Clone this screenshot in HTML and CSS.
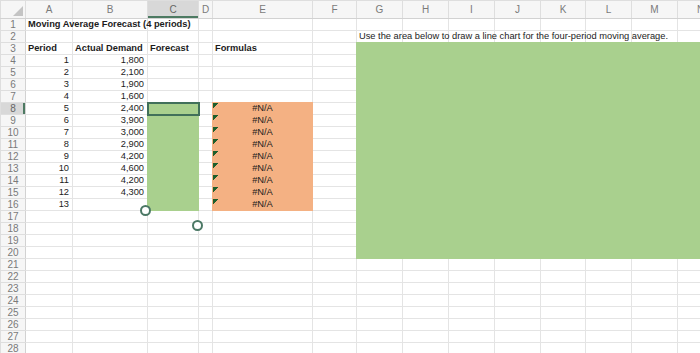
FILE: index.html
```html
<!DOCTYPE html>
<html lang="en">
<head>
  <meta charset="UTF-8" />
  <title>Moving Average Forecast</title>
  <link rel="stylesheet" href="styles.css">
</head>
<body>
  <div class="sheet">
    <table class="grid">
      <colgroup>
        <col class="w-hdr"><col class="w-a"><col class="w-b"><col class="w-c"><col class="w-d"><col class="w-e"><col class="w-f">
        <col class="w-g"><col class="w-g"><col class="w-g"><col class="w-g"><col class="w-k"><col class="w-g"><col class="w-g"><col class="w-g">
      </colgroup>
      <thead>
        <tr>
          <th class="corner"><span class="tri"></span></th>
          <th>A</th><th>B</th><th class="cur">C</th><th>D</th><th>E</th><th>F</th>
          <th>G</th><th>H</th><th>I</th><th>J</th><th>K</th><th>L</th><th>M</th><th>N</th>
        </tr>
      </thead>
      <tbody>
        <tr><th>1</th><td class="b">Moving Average Forecast (4 periods)</td><td></td><td></td><td></td><td></td><td></td><td></td><td></td><td></td><td></td><td></td><td></td><td></td><td></td></tr>
        <tr><th>2</th><td></td><td></td><td></td><td></td><td></td><td></td><td>Use the area below to draw a line chart for the four-period moving average.</td><td></td><td></td><td></td><td></td><td></td><td></td><td></td></tr>
        <tr><th>3</th><td class="b">Period</td><td class="b">Actual Demand</td><td class="b">Forecast</td><td></td><td class="b">Formulas</td><td></td><td class="chart" colspan="8" rowspan="18"></td></tr>
        <tr><th>4</th><td class="num">1</td><td class="num">1,800</td><td></td><td></td><td></td><td></td></tr>
        <tr><th>5</th><td class="num">2</td><td class="num">2,100</td><td></td><td></td><td></td><td></td></tr>
        <tr><th>6</th><td class="num">3</td><td class="num">1,900</td><td></td><td></td><td></td><td></td></tr>
        <tr><th>7</th><td class="num">4</td><td class="num">1,600</td><td></td><td></td><td></td><td></td></tr>
        <tr><th class="cur">8</th><td class="num">5</td><td class="num">2,400</td><td class="fc sel"></td><td></td><td class="err">#N/A</td><td></td></tr>
        <tr><th>9</th><td class="num">6</td><td class="num">3,900</td><td class="fc"></td><td></td><td class="err">#N/A</td><td></td></tr>
        <tr><th>10</th><td class="num">7</td><td class="num">3,000</td><td class="fc"></td><td></td><td class="err">#N/A</td><td></td></tr>
        <tr><th>11</th><td class="num">8</td><td class="num">2,900</td><td class="fc"></td><td></td><td class="err">#N/A</td><td></td></tr>
        <tr><th>12</th><td class="num">9</td><td class="num">4,200</td><td class="fc"></td><td></td><td class="err">#N/A</td><td></td></tr>
        <tr><th>13</th><td class="num">10</td><td class="num">4,600</td><td class="fc"></td><td></td><td class="err">#N/A</td><td></td></tr>
        <tr><th>14</th><td class="num">11</td><td class="num">4,200</td><td class="fc"></td><td></td><td class="err">#N/A</td><td></td></tr>
        <tr><th>15</th><td class="num">12</td><td class="num">4,300</td><td class="fc"></td><td></td><td class="err">#N/A</td><td></td></tr>
        <tr><th>16</th><td class="num">13</td><td></td><td class="fc"></td><td></td><td class="err">#N/A</td><td></td></tr>
        <tr><th>17</th><td></td><td></td><td></td><td></td><td></td><td></td></tr>
        <tr><th>18</th><td></td><td></td><td></td><td></td><td></td><td></td></tr>
        <tr><th>19</th><td></td><td></td><td></td><td></td><td></td><td></td></tr>
        <tr><th>20</th><td></td><td></td><td></td><td></td><td></td><td></td></tr>
        <tr><th>21</th><td></td><td></td><td></td><td></td><td></td><td></td><td></td><td></td><td></td><td></td><td></td><td></td><td></td><td></td></tr>
        <tr><th>22</th><td></td><td></td><td></td><td></td><td></td><td></td><td></td><td></td><td></td><td></td><td></td><td></td><td></td><td></td></tr>
        <tr><th>23</th><td></td><td></td><td></td><td></td><td></td><td></td><td></td><td></td><td></td><td></td><td></td><td></td><td></td><td></td></tr>
        <tr><th>24</th><td></td><td></td><td></td><td></td><td></td><td></td><td></td><td></td><td></td><td></td><td></td><td></td><td></td><td></td></tr>
        <tr><th>25</th><td></td><td></td><td></td><td></td><td></td><td></td><td></td><td></td><td></td><td></td><td></td><td></td><td></td><td></td></tr>
        <tr><th>26</th><td></td><td></td><td></td><td></td><td></td><td></td><td></td><td></td><td></td><td></td><td></td><td></td><td></td><td></td></tr>
        <tr><th>27</th><td></td><td></td><td></td><td></td><td></td><td></td><td></td><td></td><td></td><td></td><td></td><td></td><td></td><td></td></tr>
        <tr><th>28</th><td></td><td></td><td></td><td></td><td></td><td></td><td></td><td></td><td></td><td></td><td></td><td></td><td></td><td></td></tr>
      </tbody>
    </table>

    <!-- selection handles -->
    <div class="handle handle-start"></div>
    <div class="handle handle-end"></div>
  </div>
</body>
</html>
```

FILE: styles.css
```css
html, body {
  margin: 0;
  overflow: hidden;
  background: #fff;
}

body {
  font-family: "Liberation Sans", Arial, sans-serif;
}

.sheet {
  position: relative;
}

.grid {
  border-collapse: collapse;
  table-layout: fixed;
  width: 723px;
  font-size: 9.3px;
  color: #1c1c1c;
}

.w-hdr { width: 25px; }
.w-a { width: 47px; }
.w-b { width: 75px; }
.w-c { width: 51px; }
.w-d { width: 14px; }
.w-e { width: 100px; }
.w-f { width: 44px; }
.w-g { width: 46px; }
.w-k { width: 45px; }

/* row height = height + 1px gridline */
.grid td,
.grid th {
  height: 11px;
  padding: 0 2px;
  border: 1px solid #e4e4e4;
  white-space: nowrap;
  line-height: 11px;
  overflow: visible;
  text-align: left;
}

.grid th {
  background: #f6f6f6;
  color: #7a7a7a;
  font-weight: normal;
  font-size: 10px;
  text-align: center;
  border-color: #dedede;
}

.grid thead th {
  height: 17px;
  border-bottom-color: #d2d2d2;
}

.grid tbody th {
  border-right-color: #d2d2d2;
}

.grid th.cur {
  background: #d8d8d8;
  color: #666;
}

.grid thead th.cur {
  box-shadow: inset 0 -2px 0 #4d7a62;
}

.grid tbody th.cur {
  box-shadow: inset -2px 0 0 #4d7a62;
}

.corner {
  position: relative;
}

.tri {
  position: absolute;
  right: 2px;
  bottom: 2px;
  width: 0;
  height: 0;
  border-left: 10px solid transparent;
  border-bottom: 10px solid #c4c4c4;
}

.b {
  font-weight: bold;
}

.num {
  text-align: right !important;
  padding-right: 3px !important;
}

/* double wins the collapse over the solid gridlines, and draws solid at 1px */
.fc {
  background: #a9d08e;
  border: 1px double #a9d08e !important;
}

.sel {
  outline: 2px solid #41705a;
  outline-offset: -1px;
}

.err {
  background: linear-gradient(135deg, #1d5e2c 4px, transparent 4px) no-repeat 0 0 / 8px 8px, #f4b183;
  border: 1px double #f4b183 !important;
  text-align: center !important;
}

.chart {
  background: #a9d08e;
  border: 1px double #a9d08e !important;
}

.handle {
  position: absolute;
  width: 11px;
  height: 11px;
  box-sizing: border-box;
  border: 2px solid #4b7865;
  border-radius: 50%;
  background: #fff;
}

.handle-start {
  left: 140px;
  top: 205px;
}

.handle-end {
  left: 192px;
  top: 220px;
}
```
